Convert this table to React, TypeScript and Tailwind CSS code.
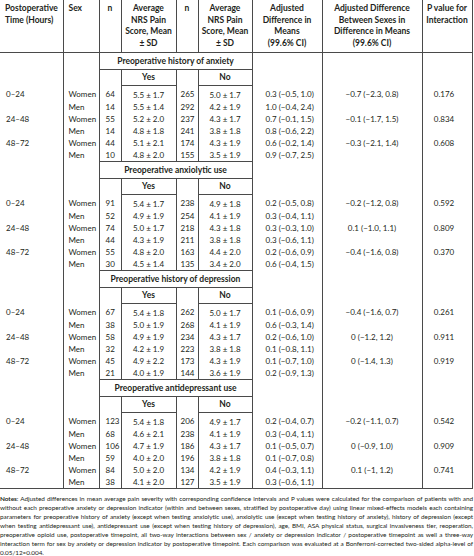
type Row = {
  time?: string
  sex: string
  n1: string
  avg1: string
  n2: string
  avg2: string
  adj: string
  diff?: string
  p?: string
}

type Group = { title: string; rows: Row[] }

const groups: Group[] = [
  {
    title: 'Preoperative history of anxiety',
    rows: [
      { time: '0–24', sex: 'Women', n1: '64', avg1: '5.5 ± 1.7', n2: '265', avg2: '5.0 ± 1.7', adj: '0.3 (−0.5, 1.0)', diff: '−0.7 (−2.3, 0.8)', p: '0.176' },
      { sex: 'Men', n1: '14', avg1: '5.5 ± 1.4', n2: '292', avg2: '4.2 ± 1.9', adj: '1.0 (−0.4, 2.4)' },
      { time: '24–48', sex: 'Women', n1: '55', avg1: '5.2 ± 2.0', n2: '237', avg2: '4.3 ± 1.7', adj: '0.7 (−0.1, 1.5)', diff: '−0.1 (−1.7, 1.5)', p: '0.834' },
      { sex: 'Men', n1: '14', avg1: '4.8 ± 1.8', n2: '241', avg2: '3.8 ± 1.8', adj: '0.8 (−0.6, 2.2)' },
      { time: '48–72', sex: 'Women', n1: '44', avg1: '5.1 ± 2.1', n2: '174', avg2: '4.3 ± 1.9', adj: '0.6 (−0.2, 1.4)', diff: '−0.3 (−2.1, 1.4)', p: '0.608' },
      { sex: 'Men', n1: '10', avg1: '4.8 ± 2.0', n2: '155', avg2: '3.5 ± 1.9', adj: '0.9 (−0.7, 2.5)' },
    ],
  },
  {
    title: 'Preoperative anxiolytic use',
    rows: [
      { time: '0–24', sex: 'Women', n1: '91', avg1: '5.4 ± 1.7', n2: '238', avg2: '4.9 ± 1.8', adj: '0.2 (−0.5, 0.8)', diff: '−0.2 (−1.2, 0.8)', p: '0.592' },
      { sex: 'Men', n1: '52', avg1: '4.9 ± 1.9', n2: '254', avg2: '4.1 ± 1.9', adj: '0.3 (−0.4, 1.1)' },
      { time: '24–48', sex: 'Women', n1: '74', avg1: '5.0 ± 1.7', n2: '218', avg2: '4.3 ± 1.8', adj: '0.3 (−0.3, 1.0)', diff: '0.1 (−1.0, 1.1)', p: '0.809' },
      { sex: 'Men', n1: '44', avg1: '4.3 ± 1.9', n2: '211', avg2: '3.8 ± 1.8', adj: '0.3 (−0.6, 1.1)' },
      { time: '48–72', sex: 'Women', n1: '55', avg1: '4.8 ± 2.0', n2: '163', avg2: '4.4 ± 2.0', adj: '0.2 (−0.6, 0.9)', diff: '−0.4 (−1.6, 0.8)', p: '0.370' },
      { sex: 'Men', n1: '30', avg1: '4.5 ± 1.4', n2: '135', avg2: '3.4 ± 2.0', adj: '0.6 (−0.4, 1.5)' },
    ],
  },
  {
    title: 'Preoperative history of depression',
    rows: [
      { time: '0–24', sex: 'Women', n1: '67', avg1: '5.4 ± 1.8', n2: '262', avg2: '5.0 ± 1.7', adj: '0.1 (−0.6, 0.9)', diff: '−0.4 (−1.6, 0.7)', p: '0.261' },
      { sex: 'Men', n1: '38', avg1: '5.0 ± 1.9', n2: '268', avg2: '4.1 ± 1.9', adj: '0.6 (−0.3, 1.4)' },
      { time: '24–48', sex: 'Women', n1: '58', avg1: '4.9 ± 1.9', n2: '234', avg2: '4.3 ± 1.7', adj: '0.2 (−0.6, 1.0)', diff: '0 (−1.2, 1.2)', p: '0.911' },
      { sex: 'Men', n1: '32', avg1: '4.2 ± 1.9', n2: '223', avg2: '3.8 ± 1.8', adj: '0.1 (−0.8, 1.1)' },
      { time: '48–72', sex: 'Women', n1: '45', avg1: '4.9 ± 2.2', n2: '173', avg2: '4.3 ± 1.9', adj: '0.1 (−0.7, 1.0)', diff: '0 (−1.4, 1.3)', p: '0.919' },
      { sex: 'Men', n1: '21', avg1: '4.0 ± 1.9', n2: '144', avg2: '3.6 ± 1.9', adj: '0.2 (−0.9, 1.3)' },
    ],
  },
  {
    title: 'Preoperative antidepressant use',
    rows: [
      { time: '0–24', sex: 'Women', n1: '123', avg1: '5.4 ± 1.8', n2: '206', avg2: '4.9 ± 1.7', adj: '0.2 (−0.4, 0.7)', diff: '−0.2 (−1.1, 0.7)', p: '0.542' },
      { sex: 'Men', n1: '68', avg1: '4.6 ± 2.1', n2: '238', avg2: '4.1 ± 1.9', adj: '0.3 (−0.4, 1.1)' },
      { time: '24–48', sex: 'Women', n1: '106', avg1: '4.7 ± 1.9', n2: '186', avg2: '4.3 ± 1.7', adj: '0.1 (−0.5, 0.7)', diff: '0 (−0.9, 1.0)', p: '0.909' },
      { sex: 'Men', n1: '59', avg1: '4.0 ± 2.0', n2: '196', avg2: '3.8 ± 1.8', adj: '0.1 (−0.7, 0.8)' },
      { time: '48–72', sex: 'Women', n1: '84', avg1: '5.0 ± 2.0', n2: '134', avg2: '4.2 ± 1.9', adj: '0.4 (−0.3, 1.1)', diff: '0.1 (−1, 1.2)', p: '0.741' },
      { sex: 'Men', n1: '38', avg1: '4.1 ± 2.0', n2: '127', avg2: '3.5 ± 1.9', adj: '0.3 (−0.6, 1.1)' },
    ],
  },
]

const notes = [
  'Adjusted differences in mean average pain severity with corresponding confidence intervals and P values were calculated for the comparison of patients with and',
  'without each preoperative anxiety or depression indicator (within and between sexes, stratified by postoperative day) using linear mixed-effects models each containing',
  'parameters for preoperative history of anxiety (except when testing anxiolytic use), anxiolytic use (except when testing history of anxiety), history of depression (except',
  'when testing antidepressant use), antidepressant use (except when testing history of depression), age, BMI, ASA physical status, surgical invasiveness tier, reoperation,',
  'preoperative opioid use, postoperative timepoint, all two-way interactions between sex / anxiety or depression indicator / postoperative timepoint as well a three-way',
  'interaction term for sex by anxiety or depression indicator by postoperative timepoint. Each comparison was evaluated at a Bonferroni-corrected two-sided alpha-level of',
]

// every bordered cell uses this colour
const line = 'border-[#4a4a4a]'

function GroupRows({ group, last }: { group: Group; last: boolean }) {
  const side = `p-0 border-r ${line}`
  return (
    <>
      <tr className="h-[17px]">
        <td className={side} />
        <td className={side} />
        <td colSpan={4} className={`${side} border-b text-center font-bold text-[8.5px]`}>
          {group.title}
        </td>
        <td className={side} />
        <td className={side} />
        <td className={side} />
      </tr>
      <tr className="h-[16px]">
        <td className={side} />
        <td className={side} />
        <td className={side} />
        <td className={`${side} border-b text-center font-bold text-[8.5px]`}>Yes</td>
        <td className={side} />
        <td className={`${side} border-b text-center font-bold text-[8.5px]`}>No</td>
        <td className={side} />
        <td className={side} />
        <td className={side} />
      </tr>
      {group.rows.map((r, i) => {
        const isLast = i === group.rows.length - 1
        const first = i === 0 ? 'pt-[3px] h-[15px]' : 'h-[12px]'
        const mid = isLast ? 'border-b' : ''
        const outer = isLast && last ? 'border-b' : ''
        return (
          <tr key={i}>
            <td className={`${side} ${first} ${outer} pl-[6px]`}>{r.time}</td>
            <td className={`${side} ${first} ${outer} pl-[5px]`}>{r.sex}</td>
            <td className={`${side} ${first} ${mid} pl-[6px]`}>{r.n1}</td>
            <td className={`${side} ${first} ${mid} text-center`}>{r.avg1}</td>
            <td className={`${side} ${first} ${mid} pl-[4px]`}>{r.n2}</td>
            <td className={`${side} ${first} ${mid} text-center`}>{r.avg2}</td>
            <td className={`${side} ${first} ${outer} pl-[13px]`}>{r.adj}</td>
            <td className={`${side} ${first} ${outer} text-center`}>{r.diff}</td>
            <td className={`${side} ${first} ${outer} text-center pr-[6px]`}>{r.p}</td>
          </tr>
        )
      })}
    </>
  )
}

export default function App() {
  const head = `p-0 pt-[3px] align-top border-r border-b ${line} font-bold`
  return (
    <div className="w-[474px] h-[556px] overflow-hidden bg-white text-[#231f20] font-[Lato,sans-serif]">
      <table className="table-fixed border-collapse w-[472px] text-[8px] leading-[12px] whitespace-nowrap">
        <colgroup>
          <col className="w-[63px]" />
          <col className="w-[36px]" />
          <col className="w-[22px]" />
          <col className="w-[55px]" />
          <col className="w-[22px]" />
          <col className="w-[54px]" />
          <col className="w-[70px]" />
          <col className="w-[100px]" />
          <col className="w-[50px]" />
        </colgroup>
        <thead className="text-[8.5px] leading-[11.7px]">
          <tr className="h-[52px]">
            <th className={`${head} text-left pl-[5px]`}>
              Postoperative
              <br />
              Time (Hours)
            </th>
            <th className={`${head} text-left pl-[5px]`}>Sex</th>
            <th className={`${head} text-center`}>n</th>
            <th className={`${head} text-center`}>
              Average
              <br />
              NRS Pain
              <br />
              Score, Mean
              <br />± SD
            </th>
            <th className={`${head} text-center`}>n</th>
            <th className={`${head} text-center`}>
              Average
              <br />
              NRS Pain
              <br />
              Score, Mean
              <br />± SD
            </th>
            <th className={`${head} text-center`}>
              Adjusted
              <br />
              Difference in
              <br />
              Means
              <br />
              (99.6% CI)
            </th>
            <th className={`${head} text-center`}>
              Adjusted Difference
              <br />
              Between Sexes in
              <br />
              Difference in Means
              <br />
              (99.6% CI)
            </th>
            <th className={`${head} text-center`}>
              P value for
              <br />
              Interaction
            </th>
          </tr>
        </thead>
        <tbody>
          {groups.map((g, i) => (
            <GroupRows key={g.title} group={g} last={i === groups.length - 1} />
          ))}
        </tbody>
      </table>

      {/* notes under the table */}
      <div className="pt-[5px] text-[6.4px] leading-[9px] tracking-[-0.05px]">
        {notes.map((t, i) => (
          <div key={i} className="w-[473px] whitespace-nowrap text-justify [text-align-last:justify]">
            {i === 0 && <span className="font-bold">Notes</span>}
            {i === 0 ? ': ' : ''}
            {t}
          </div>
        ))}
        <div className="whitespace-nowrap">0.05/12≈0.004.</div>
      </div>
    </div>
  )
}
